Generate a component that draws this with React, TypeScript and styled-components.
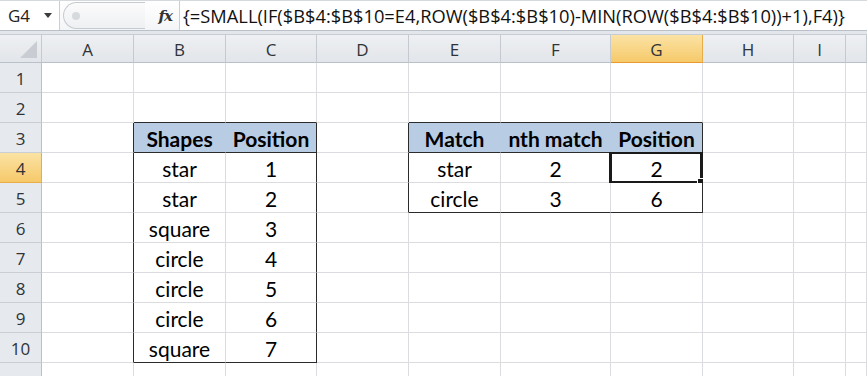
import React from "react";
import styled, { createGlobalStyle, css } from "styled-components";

const Global = createGlobalStyle`
  html, body { margin: 0; padding: 0; background: #ffffff; }
  body { width: 867px; height: 376px; overflow: hidden; }
  * { box-sizing: border-box; }
`;

const Page = styled.div`
  width: 867px;
  height: 376px;
  display: flex;
  flex-direction: column;
  background: #ffffff;
  overflow: hidden;
  & > * { flex-shrink: 0; }
`;

const FormulaBar = styled.div`
  display: flex;
  height: 31px;
  background: #ffffff;
  border-top: 1px solid #d5d9de;
  border-bottom: 1px solid #b9c0c8;
`;

const NameBox = styled.div`
  width: 60px;
  display: flex;
  align-items: center;
  justify-content: space-between;
  padding: 0 7px 0 8px;
  font-family: "Open Sans", "Noto Sans", sans-serif;
  font-size: 17px;
  color: #222;
  border-right: 1px solid #c9ced4;
`;

const Caret = styled.span`
  width: 0;
  height: 0;
  border-left: 4px solid transparent;
  border-right: 4px solid transparent;
  border-top: 5px solid #3c3c3c;
`;

const Middle = styled.div`
  width: 120px;
  display: flex;
  align-items: center;
  padding-left: 3px;
  background: linear-gradient(#ffffff, #f4f5f7);
  border-right: 1px solid #c9ced4;
`;

const Pill = styled.div`
  width: 82px;
  height: 27px;
  border: 1px solid #c6cbd1;
  border-right: none;
  border-radius: 14px 0 0 14px;
  background: linear-gradient(#fbfbfc, #eef0f2);
  display: flex;
  align-items: center;
  padding-left: 8px;
`;

const Dot = styled.span`
  width: 8px;
  height: 8px;
  border-radius: 50%;
  background: #d7dadd;
`;

const Fx = styled.span`
  margin-left: auto;
  margin-right: 7px;
  font-family: "DejaVu Serif", "Liberation Serif", serif;
  font-style: italic;
  font-weight: bold;
  font-size: 15px;
  color: #333;
  letter-spacing: -1px;
`;

const FormulaText = styled.div`
  flex: 1;
  display: flex;
  align-items: center;
  padding-left: 3px;
  font-family: "Open Sans", "Noto Sans", sans-serif;
  font-size: 18.3px;
  color: #111;
  white-space: nowrap;
  overflow: hidden;
`;

const Strip = styled.div`
  height: 4px;
  background: #e3e6ea;
  border-bottom: 1px solid #c8cdd3;
`;

const Grid = styled.div`
  display: grid;
  grid-template-columns: 42px 92px 92px 91px 92px 92px 110px 92px 91px 52px 21px;
  grid-template-rows: 28px repeat(10, 30px) 30px;
`;

const headerBase = css`
  display: flex;
  align-items: center;
  justify-content: center;
  font-family: "Open Sans", "Noto Sans", sans-serif;
  font-size: 17px;
  color: #2f3338;
`;

const ColHead = styled.div<{ $active?: boolean }>`
  ${headerBase}
  padding-top: 1px;
  background: ${(p) =>
    p.$active
      ? "linear-gradient(#fbe3a4, #f6c96a)"
      : "linear-gradient(#eef0f3, #e2e5e9)"};
  border-right: 1px solid ${(p) => (p.$active ? "#e8ad48" : "#c5cad0")};
  border-bottom: 1px solid ${(p) => (p.$active ? "#e89b2f" : "#b9c0c8")};
`;

const Corner = styled.div`
  position: relative;
  background: linear-gradient(#eef0f3, #e2e5e9);
  border-right: 1px solid #c5cad0;
  border-bottom: 1px solid #b9c0c8;
  &::after {
    content: "";
    position: absolute;
    right: 4px;
    bottom: 4px;
    width: 0;
    height: 0;
    border-left: 17px solid transparent;
    border-bottom: 17px solid #c9cdd3;
  }
`;

const RowHead = styled.div<{ $active?: boolean }>`
  ${headerBase}
  padding-top: 2px;
  background: ${(p) =>
    p.$active ? "linear-gradient(#fbe3a4, #f6c96a)" : "#e6e9ed"};
  border-right: 1px solid ${(p) => (p.$active ? "#e8ad48" : "#b9c0c8")};
  border-bottom: 1px solid ${(p) => (p.$active ? "#e8ad48" : "#c9ced4")};
`;

const Cell = styled.div<{
  $right: string;
  $bottom: string;
  $fill?: string;
  $bold?: boolean;
}>`
  position: relative;
  display: flex;
  align-items: flex-end;
  justify-content: center;
  padding-bottom: 1px;
  font-family: "Lato", "Noto Sans", sans-serif;
  font-size: 21px;
  font-weight: ${(p) => (p.$bold ? 700 : 400)};
  color: #000;
  background: ${(p) => p.$fill || "#ffffff"};
  border-right: 1px solid ${(p) => p.$right};
  border-bottom: 1px solid ${(p) => p.$bottom};
  white-space: nowrap;
`;

const Selection = styled.div`
  position: absolute;
  left: -2px;
  top: -1px;
  right: -1px;
  bottom: -2px;
  border: 3px solid #1a1a1a;
  border-top-width: 2px;
  pointer-events: none;
  &::after {
    content: "";
    position: absolute;
    right: -5px;
    bottom: -5px;
    width: 6px;
    height: 6px;
    background: #1a1a1a;
    border: 1px solid #ffffff;
  }
`;

const GRID = "#dadcdf";
const DARK = "#2b2b2b";
const FILL = "#b8cce4";

type Val = { t: string; bold?: boolean };
const data: Record<string, Val> = {
  "3,2": { t: "Shapes", bold: true },
  "3,3": { t: "Position", bold: true },
  "4,2": { t: "star" },
  "4,3": { t: "1" },
  "5,2": { t: "star" },
  "5,3": { t: "2" },
  "6,2": { t: "square" },
  "6,3": { t: "3" },
  "7,2": { t: "circle" },
  "7,3": { t: "4" },
  "8,2": { t: "circle" },
  "8,3": { t: "5" },
  "9,2": { t: "circle" },
  "9,3": { t: "6" },
  "10,2": { t: "square" },
  "10,3": { t: "7" },
  "3,5": { t: "Match", bold: true },
  "3,6": { t: "nth match", bold: true },
  "3,7": { t: "Position", bold: true },
  "4,5": { t: "star" },
  "4,6": { t: "2" },
  "4,7": { t: "2" },
  "5,5": { t: "circle" },
  "5,6": { t: "3" },
  "5,7": { t: "6" },
};

const tables = [
  { r1: 3, r2: 10, c1: 2, c2: 3 },
  { r1: 3, r2: 5, c1: 5, c2: 7 },
];

const inTable = (r: number, c: number) =>
  tables.find((t) => r >= t.r1 && r <= t.r2 && c >= t.c1 && c <= t.c2);

const isFilled = (r: number, c: number) => {
  const t = inTable(r, c);
  return !!t && r === t.r1;
};

const rightColor = (r: number, c: number) => {
  for (const t of tables) {
    if (r >= t.r1 && r <= t.r2 && (c === t.c1 - 1 || c === t.c2)) return DARK;
  }
  if (isFilled(r, c) && isFilled(r, c + 1)) return FILL;
  return GRID;
};

const bottomColor = (r: number, c: number) => {
  for (const t of tables) {
    if (c >= t.c1 && c <= t.c2 && (r === t.r1 - 1 || r === t.r1 || r === t.r2))
      return DARK;
  }
  return GRID;
};

const cols = ["A", "B", "C", "D", "E", "F", "G", "H", "I", ""];

export default function App() {
  const rows = Array.from({ length: 11 }, (_, i) => i + 1);
  return (
    <Page>
      <Global />
      <FormulaBar>
        <NameBox>
          <span>G4</span>
          <Caret />
        </NameBox>
        <Middle>
          <Pill>
            <Dot />
          </Pill>
          <Fx>fx</Fx>
        </Middle>
        <FormulaText>
          {"{=SMALL(IF($B$4:$B$10=E4,ROW($B$4:$B$10)-MIN(ROW($B$4:$B$10))+1),F4)}"}
        </FormulaText>
      </FormulaBar>
      <Strip />
      <Grid>
        <Corner />
        {cols.map((l, i) => (
          <ColHead key={i} $active={l === "G"}>
            {l}
          </ColHead>
        ))}
        {rows.map((r) => (
          <React.Fragment key={r}>
            <RowHead $active={r === 4}>{r <= 10 ? r : ""}</RowHead>
            {cols.map((_, ci) => {
              const c = ci + 1;
              const v = data[`${r},${c}`];
              return (
                <Cell
                  key={c}
                  $right={rightColor(r, c)}
                  $bottom={bottomColor(r, c)}
                  $fill={isFilled(r, c) ? FILL : undefined}
                  $bold={v?.bold}
                >
                  {v?.t}
                  {r === 4 && c === 7 && <Selection />}
                </Cell>
              );
            })}
          </React.Fragment>
        ))}
      </Grid>
    </Page>
  );
}
